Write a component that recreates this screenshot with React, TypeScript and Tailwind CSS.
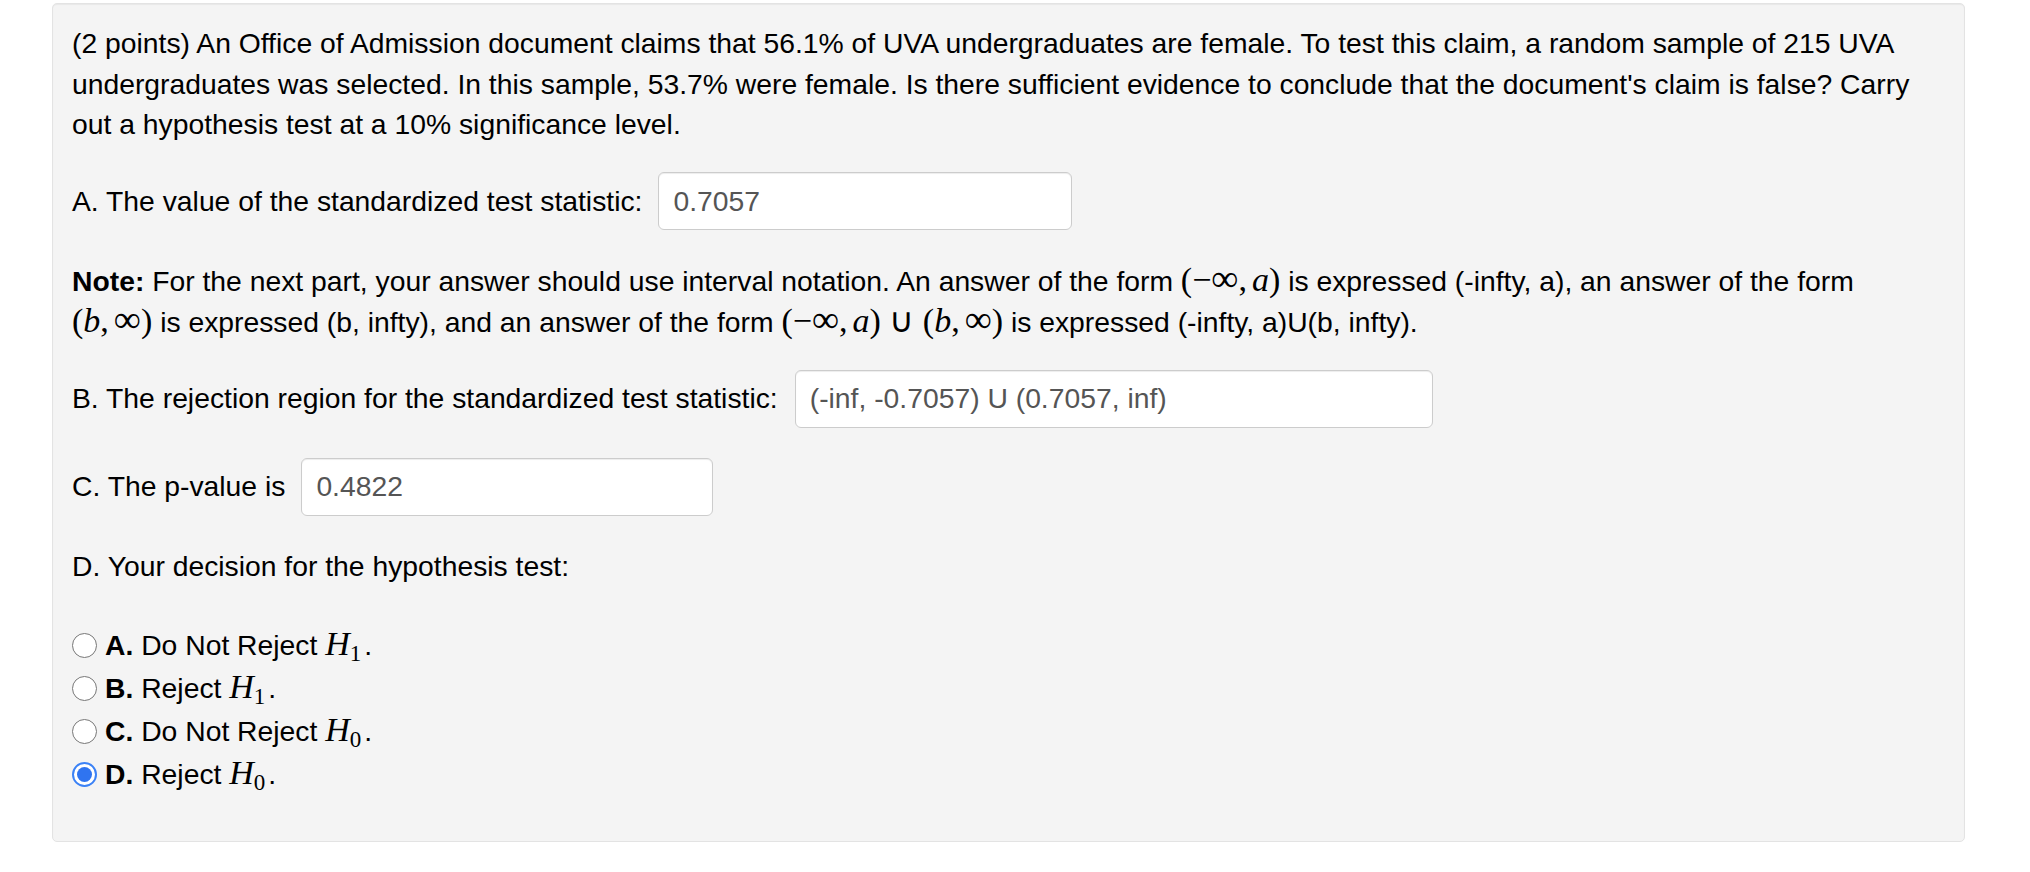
import React from "react";

// inline TeX-like bits (MathJax look-alike)
function M({ children, className = "" }: { children: React.ReactNode; className?: string }) {
    return (
        <span className={"font-['Liberation_Serif','Times_New_Roman',serif] text-[34px] leading-none " + className}>
            {children}
        </span>
    );
}

function I({ children }: { children: React.ReactNode }) {
    return <span className="italic">{children}</span>;
}

function Inf() {
    return <span className="text-[38px] leading-[0]">∞</span>;
}

function Comma() {
    return <span className="mr-[5px]">,</span>;
}

function Hyp({ n }: { n: string }) {
    return (
        <M className="mr-[3px]">
            <I>H</I>
            <sub className="text-[23px] not-italic">{n}</sub>
        </M>
    );
}

function Radio({ checked }: { checked?: boolean }) {
    if (checked) {
        return (
            <span className="flex h-[25px] w-[25px] shrink-0 items-center justify-center rounded-full border-2 border-[#3b82f6] bg-white">
                <span className="h-[15px] w-[15px] rounded-full bg-[#2f74f0]" />
            </span>
        );
    }
    return <span className="h-[25px] w-[25px] shrink-0 rounded-full border-[1.5px] border-[#777777] bg-white" />;
}

function Answer({ value, width }: { value: string; width: string }) {
    return (
        <input
            readOnly
            value={value}
            className={
                "h-[58px] rounded-[6px] border border-[#cccccc] bg-white px-[14px] text-[28.3px] text-[#555555] shadow-[inset_0_1px_1px_rgba(0,0,0,0.075)] outline-none " +
                width
            }
        />
    );
}

const options = [
    { key: "A.", text: "Do Not Reject", n: "1", checked: false },
    { key: "B.", text: "Reject", n: "1", checked: false },
    { key: "C.", text: "Do Not Reject", n: "0", checked: false },
    { key: "D.", text: "Reject", n: "0", checked: true },
];

export default function App() {
    return (
        <div className="min-h-screen bg-white pt-[3px] font-['Liberation_Sans',Helvetica,Arial,sans-serif] text-[28.3px] leading-[40.7px] text-black">
            <div className="ml-[52px] w-[1913px] rounded-[5px] border border-[#e3e3e3] bg-[#f4f4f4] pl-[19px] pr-[40px] pt-[19px] pb-[45px] shadow-[inset_0_1px_1px_rgba(0,0,0,0.05)]">
                {/* Problem text */}
                <p>
                    (2 points) An Office of Admission document claims that 56.1% of UVA undergraduates are female. To test this
                    claim, a random sample of 215 UVA undergraduates was selected. In this sample, 53.7% were female. Is there
                    sufficient evidence to conclude that the document's claim is false? Carry out a hypothesis test at a 10%
                    significance level.
                </p>

                <div className="mt-[27px] flex items-center gap-[16px]">
                    <span>A. The value of the standardized test statistic:</span>
                    <Answer value="0.7057" width="w-[414px]" />
                </div>

                <p className="mt-[31px]">
                    <b>Note:</b> For the next part, your answer should use interval notation. An answer of the form{" "}
                    <M>
                        (−<Inf />
                        <Comma />
                        <I>a</I>)
                    </M>{" "}
                    is expressed (-infty, a), an answer of the form
                    <br />
                    <M>
                        (<I>b</I>
                        <Comma />
                        <Inf />)
                    </M>{" "}
                    is expressed (b, infty), and an answer of the form{" "}
                    <M>
                        (−<Inf />
                        <Comma />
                        <I>a</I>) ∪ (<I>b</I>
                        <Comma />
                        <Inf />)
                    </M>{" "}
                    is expressed (-infty, a)U(b, infty).
                </p>

                <div className="mt-[27px] flex items-center gap-[17px]">
                    <span>B. The rejection region for the standardized test statistic:</span>
                    <Answer value="(-inf, -0.7057) U (0.7057, inf)" width="w-[638px]" />
                </div>

                <div className="mt-[30px] flex items-center gap-[16px]">
                    <span>C. The p-value is</span>
                    <Answer value="0.4822" width="w-[412px]" />
                </div>

                <p className="mt-[30px]">D. Your decision for the hypothesis test:</p>

                <div className="mt-[38px] flex flex-col">
                    {options.map((o) => (
                        <label key={o.key} className="flex h-[43px] items-center gap-[8px]">
                            <Radio checked={o.checked} />
                            <span>
                                <b>{o.key}</b> {o.text} <Hyp n={o.n} />.
                            </span>
                        </label>
                    ))}
                </div>
            </div>
        </div>
    );
}
